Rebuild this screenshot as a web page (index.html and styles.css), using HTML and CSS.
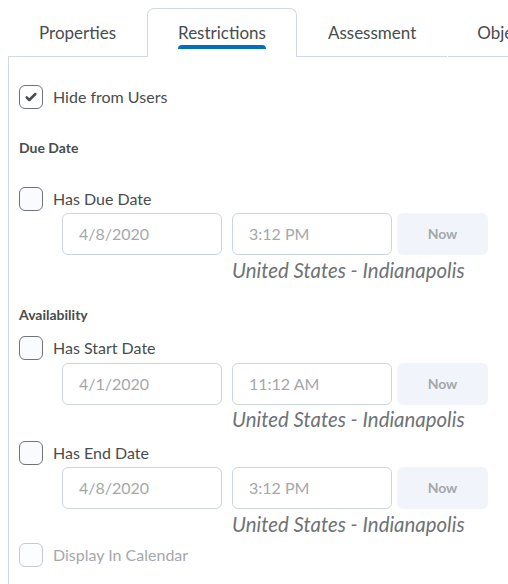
FILE: index.html
```html
<!DOCTYPE html>
<html lang="en">
<head>
<meta charset="utf-8">
<title>Restrictions</title>
<link rel="stylesheet" href="styles.css">
</head>
<body>
<div class="tabs">
  <div class="tab"><span class="tab-label">Properties</span></div>
  <div class="tab tab-active"><span class="tab-label">Restrictions<span class="tab-bar"></span></span></div>
  <div class="tab"><span class="tab-label">Assessment</span></div>
  <div class="tab tab-last"><span class="tab-label">Objectives</span></div>
</div>
<div class="panel">
  <label class="check-row row-hide">
    <span class="box box-checked">
      <svg viewBox="0 0 24 24" width="16" height="16"><path d="M5.5 12.5l4 4L18.5 7.5" fill="none" stroke="#494c4e" stroke-width="3.8" stroke-linecap="round" stroke-linejoin="round"/></svg>
    </span>
    <span class="check-text">Hide from Users</span>
  </label>

  <div class="section-label label-due">Due Date</div>
  <label class="check-row row-due">
    <span class="box"></span>
    <span class="check-text">Has Due Date</span>
  </label>
  <div class="datetime">
    <div class="input">4/8/2020</div>
    <div class="input">3:12 PM</div>
    <div class="now">Now</div>
  </div>
  <div class="tz">United States - Indianapolis</div>

  <div class="section-label label-avail">Availability</div>
  <label class="check-row row-start">
    <span class="box"></span>
    <span class="check-text">Has Start Date</span>
  </label>
  <div class="datetime">
    <div class="input">4/1/2020</div>
    <div class="input">11:12 AM</div>
    <div class="now">Now</div>
  </div>
  <div class="tz">United States - Indianapolis</div>

  <label class="check-row row-end">
    <span class="box"></span>
    <span class="check-text">Has End Date</span>
  </label>
  <div class="datetime">
    <div class="input">4/8/2020</div>
    <div class="input">3:12 PM</div>
    <div class="now">Now</div>
  </div>
  <div class="tz">United States - Indianapolis</div>

  <label class="check-row row-cal disabled">
    <span class="box"></span>
    <span class="check-text">Display In Calendar</span>
  </label>
</div>
</body>
</html>
```
FILE: styles.css
```css
html, body {
  margin: 0;
  padding: 0;
  background: #ffffff;
}
body {
  font-family: Lato, "Open Sans", sans-serif;
  color: #494c4e;
  width: 508px;
  height: 584px;
  overflow: hidden;
}
.tabs {
  display: flex;
  margin-left: 8px;
  padding-top: 8px;
  white-space: nowrap;
  overflow: hidden;
}
.tab {
  box-sizing: border-box;
  height: 49px;
  padding: 13px 31px 0;
  border-bottom: 1px solid #d3d9e3;
  font-size: 17px;
  line-height: 24px;
  flex: none;
}
.tab-last {
  flex: 1 0 auto;
  margin-left: 1px;
  padding-left: 29px;
}
.tab-active {
  border: 1px solid #d3d9e3;
  border-bottom: none;
  border-radius: 7px 7px 0 0;
  padding: 12px 30px 0;
}
.tab-label {
  display: inline-flex;
  flex-direction: column;
}
.tab-bar {
  display: block;
  height: 4px;
  margin-top: 0;
  background: #006fbf;
  border-radius: 4px 4px 0 0;
}
.panel {
  border-left: 1px solid #d3d9e3;
  margin-left: 8px;
  padding: 28px 0 40px 10px;
}
.check-row {
  display: flex;
  align-items: center;
  height: 24px;
}
.box {
  box-sizing: border-box;
  width: 24px;
  height: 24px;
  border: 1px solid #6e7376;
  border-radius: 6px;
  background: #f9fbff;
  display: flex;
  align-items: center;
  justify-content: center;
  flex: none;
}
.box-checked {
  background: #ffffff;
}
.check-text {
  margin-left: 10px;
  font-size: 16px;
  line-height: 24px;
}
.disabled .box {
  border-color: #c7cacd;
  background: #fcfdff;
}
.disabled .check-text {
  color: #a4a8ab;
}
.section-label {
  font-size: 14px;
  font-weight: 700;
  line-height: 20px;
}
.label-due {
  margin-top: 29px;
}
.row-due {
  margin-top: 29px;
}
.label-avail {
  margin-top: 21px;
}
.row-start {
  margin-top: 11px;
}
.row-end {
  margin-top: 8px;
}
.row-cal {
  margin-top: 5px;
}
.datetime {
  display: flex;
  margin-left: 43px;
  margin-top: 2px;
}
.row-start + .datetime {
  margin-top: 3px;
}
.input {
  box-sizing: border-box;
  width: 160px;
  height: 42px;
  border: 1px solid #cdd5dc;
  border-radius: 6px;
  padding-left: 16px;
  font-size: 16px;
  line-height: 40px;
  color: #a4a8ab;
  background: #ffffff;
  margin-right: 10px;
}
.input + .input {
  margin-right: 5px;
}
.now {
  box-sizing: border-box;
  width: 91px;
  height: 42px;
  border-radius: 6px;
  background: #f1f5fb;
  color: #a4a8ab;
  font-size: 14px;
  font-weight: 700;
  line-height: 42px;
  text-align: center;
}
.tz {
  margin-left: 213px;
  margin-top: 2px;
  font-size: 20.4px;
  font-style: italic;
  line-height: 27px;
  color: #6e7376;
  white-space: nowrap;
}
.row-start + .datetime + .tz {
  margin-top: 1px;
}
```
